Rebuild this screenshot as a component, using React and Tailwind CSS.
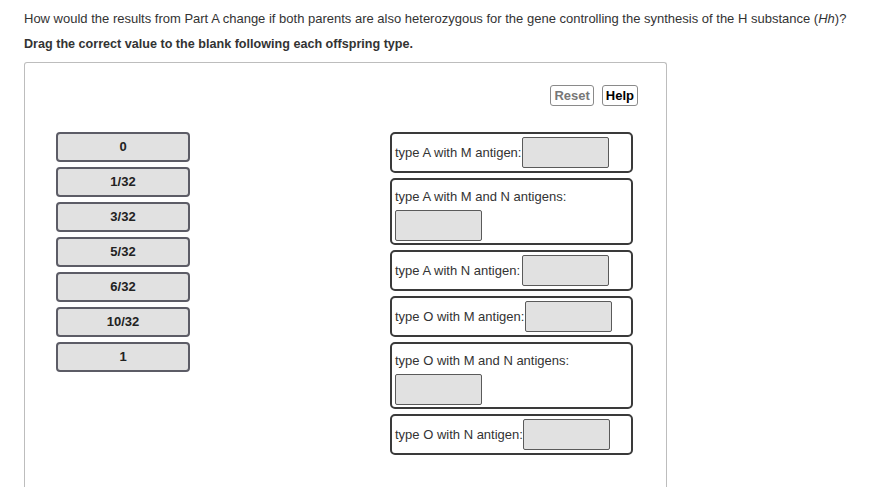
const values = ["0", "1/32", "3/32", "5/32", "6/32", "10/32", "1"];

const targets = [
  { label: "type A with M antigen:", wrap: false, gap: "ml-px" },
  { label: "type A with M and N antigens:", wrap: true },
  { label: "type A with N antigen:", wrap: false, gap: "ml-[2px]" },
  { label: "type O with M antigen:", wrap: false, gap: "ml-px" },
  { label: "type O with M and N antigens:", wrap: true },
  { label: "type O with N antigen:", wrap: false, gap: "ml-0" },
];

function Blank() {
  return <div className="w-[87px] h-[31px] bg-[#e1e1e1] border-[1.5px] border-[#5a5a5a] rounded-[2px]" />;
}

function Target({ label, wrap, gap }) {
  if (wrap) {
    return (
      <div className="border-2 border-[#3a3a3a] rounded-[5px] pl-[3px] pt-[4px] pb-[3px] h-[67px]">
        <div className="h-[26px] flex items-center">{label}</div>
        <Blank />
      </div>
    );
  }
  return (
    <div className="border-2 border-[#3a3a3a] rounded-[5px] pl-[3px] h-[41px] flex items-center">
      <span className="whitespace-nowrap">{label}</span>
      <div className={gap}>
        <Blank />
      </div>
    </div>
  );
}

export default function App() {
  return (
    <div className="w-[870px] h-[487px] overflow-hidden bg-white text-[#333] text-[13px]" style={{ fontFamily: '"Liberation Sans", Arial, sans-serif' }}>
      <p className="pl-[24px] pt-[11px] leading-[15px]">
        How would the results from Part A change if both parents are also heterozygous for the gene controlling the synthesis of the H substance (<i>Hh</i>)?
      </p>
      <p className="pl-[24px] mt-[11px] font-bold text-[12.6px] leading-[15px]">
        Drag the correct value to the blank following each offspring type.
      </p>

      <div className="ml-[24px] mt-[10px] w-[643px] h-[440px] border border-b-0 border-[#bdbdbd] rounded-t-[3px]">
        <div className="flex justify-end gap-[8px] pt-[22px] pr-[28px]">
          <button className="h-[21px] px-[3px] border border-[#8a8a8a] rounded-[3px] font-bold text-[#777] bg-white">Reset</button>
          <button className="h-[21px] px-[3px] border border-[#8a8a8a] rounded-[3px] font-bold text-black bg-white">Help</button>
        </div>

        <div className="flex mt-[26px]">
          <div className="ml-[31px] w-[134px] flex flex-col gap-[5px]">
            {values.map((v) => (
              <div key={v} className="h-[30px] bg-[#e1e1e1] border-2 border-[#5c5c66] rounded-[4px] flex items-center justify-center font-bold text-[#222]">
                {v}
              </div>
            ))}
          </div>

          <div className="ml-[200px] w-[243px] flex flex-col gap-[5px]">
            {targets.map((t) => (
              <Target key={t.label} {...t} />
            ))}
          </div>
        </div>
      </div>
    </div>
  );
}
